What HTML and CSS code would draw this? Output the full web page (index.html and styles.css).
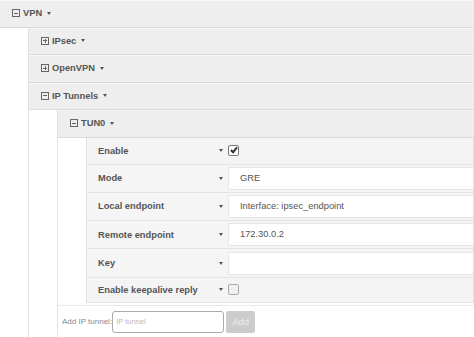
FILE: index.html
```html
<!DOCTYPE html>
<html lang="en">
<head>
    <meta charset="UTF-8">
    <title>VPN</title>
    <link rel="stylesheet" href="styles.css">
</head>
<body>
    <div class="tree">
        <div class="node">
            <div class="node-head"><span class="toggle minus"></span>VPN<span class="caret"></span></div>
            <div class="node-body">
                <div class="node">
                    <div class="node-head"><span class="toggle plus"></span>IPsec<span class="caret"></span></div>
                </div>
                <div class="node">
                    <div class="node-head"><span class="toggle plus"></span>OpenVPN<span class="caret"></span></div>
                </div>
                <div class="node">
                    <div class="node-head"><span class="toggle minus"></span>IP Tunnels<span class="caret"></span></div>
                    <div class="node-body">
                        <div class="node">
                            <div class="node-head"><span class="toggle minus"></span>TUN0<span class="caret"></span></div>
                            <div class="node-body">
                                <div class="options">
                                    <div class="opt opt-check opt-first">
                                        <label>Enable</label>
                                        <span class="caret"></span>
                                        <span class="check checked"></span>
                                    </div>
                                    <div class="opt">
                                        <label>Mode</label>
                                        <span class="caret"></span>
                                        <div class="field">GRE</div>
                                    </div>
                                    <div class="opt">
                                        <label>Local endpoint</label>
                                        <span class="caret"></span>
                                        <div class="field">Interface: ipsec_endpoint</div>
                                    </div>
                                    <div class="opt">
                                        <label>Remote endpoint</label>
                                        <span class="caret"></span>
                                        <div class="field">172.30.0.2</div>
                                    </div>
                                    <div class="opt">
                                        <label>Key</label>
                                        <span class="caret"></span>
                                        <div class="field"></div>
                                    </div>
                                    <div class="opt opt-check">
                                        <label>Enable keepalive reply</label>
                                        <span class="caret"></span>
                                        <span class="check"></span>
                                    </div>
                                </div>
                            </div>
                        </div>
                        <div class="add-row">
                            <span class="add-label">Add IP tunnel:</span>
                            <input type="text" class="add-input" placeholder="IP tunnel">
                            <button class="add-btn" disabled>Add</button>
                        </div>
                    </div>
                </div>
            </div>
        </div>
    </div>
</body>
</html>
```

FILE: styles.css
```css
body {
    margin: 0;
    background: #fff;
    font-family: "Liberation Sans", Arial, sans-serif;
    font-size: 9.3px;
    color: #555;
    overflow: hidden;
}
.node-head {
    display: flex;
    align-items: center;
    height: 26.5px;
    padding-left: 12px;
    background: #eeeeee;
    border-bottom: 1px solid #dadada;
    box-shadow: inset 0 1px 0 #f6f6f6;
    font-weight: bold;
    color: #555;
}
.node-body {
    margin-left: 28px;
    border-left: 1px solid #e2e2e2;
}
.toggle {
    position: relative;
    width: 6px;
    height: 6px;
    border: 1px solid #666;
    margin-right: 3px;
}
.toggle::before,
.toggle.plus::after {
    content: "";
    position: absolute;
    background: #666;
}
.toggle::before {
    left: 1px;
    right: 1px;
    top: 2.5px;
    height: 1px;
}
.toggle.plus::after {
    top: 1px;
    bottom: 1px;
    left: 2.5px;
    width: 1px;
}
.caret {
    display: inline-block;
    width: 0;
    height: 0;
    margin-left: 5px;
    border-left: 2.5px solid transparent;
    border-right: 2.5px solid transparent;
    border-top: 3px solid #555;
}
.options {
    border-right: 1px solid #e2e2e2;
}
.opt {
    display: flex;
    align-items: center;
    height: 27.3px;
    background: #f5f5f5;
    border-bottom: 1px solid #e4e4e4;
}
.opt-check {
    height: 24.5px;
    background: #f4f4f4;
}
.opt-first {
    height: 26px;
}
.opt label {
    width: 121px;
    padding-left: 11px;
    font-weight: bold;
}
.opt .caret {
    margin-left: 0;
    margin-right: 5px;
}
.field {
    flex: 1;
    height: 21px;
    line-height: 21px;
    padding-left: 11px;
    background: #fff;
    border: 1px solid #e6e6e6;
    border-right: none;
    border-radius: 2px 0 0 2px;
}
.check {
    position: relative;
    width: 9px;
    height: 9px;
    border: 1px solid #aaa;
    border-radius: 2px;
    background: #efefef;
}
.check.checked {
    background: #fff;
    border-color: #777;
}
.check.checked::after {
    content: "";
    position: absolute;
    left: 3px;
    top: 0;
    width: 2px;
    height: 5px;
    border-right: 2px solid #333;
    border-bottom: 2px solid #333;
    transform: rotate(40deg);
}
.add-row {
    display: flex;
    align-items: center;
    height: 31px;
    margin-top: 2px;
    padding-left: 4px;
    border-top: 1px solid #eaeaea;
    border-bottom: 1px solid #e2e2e2;
}
.add-label {
    font-size: 8px;
    color: #888;
}
.add-input {
    box-sizing: border-box;
    width: 112px;
    height: 22px;
    padding: 0 3px;
    border: 1px solid #aaa;
    border-radius: 3px;
    font-family: inherit;
    font-size: 7.5px;
    color: #555;
}
.add-input::placeholder {
    color: #bbb;
}
.add-btn {
    margin-left: 2px;
    width: 29px;
    height: 22px;
    padding: 0;
    border: none;
    border-radius: 2px;
    background: #cccccc;
    color: #eee;
    font-family: inherit;
    font-size: 9.5px;
}
```
